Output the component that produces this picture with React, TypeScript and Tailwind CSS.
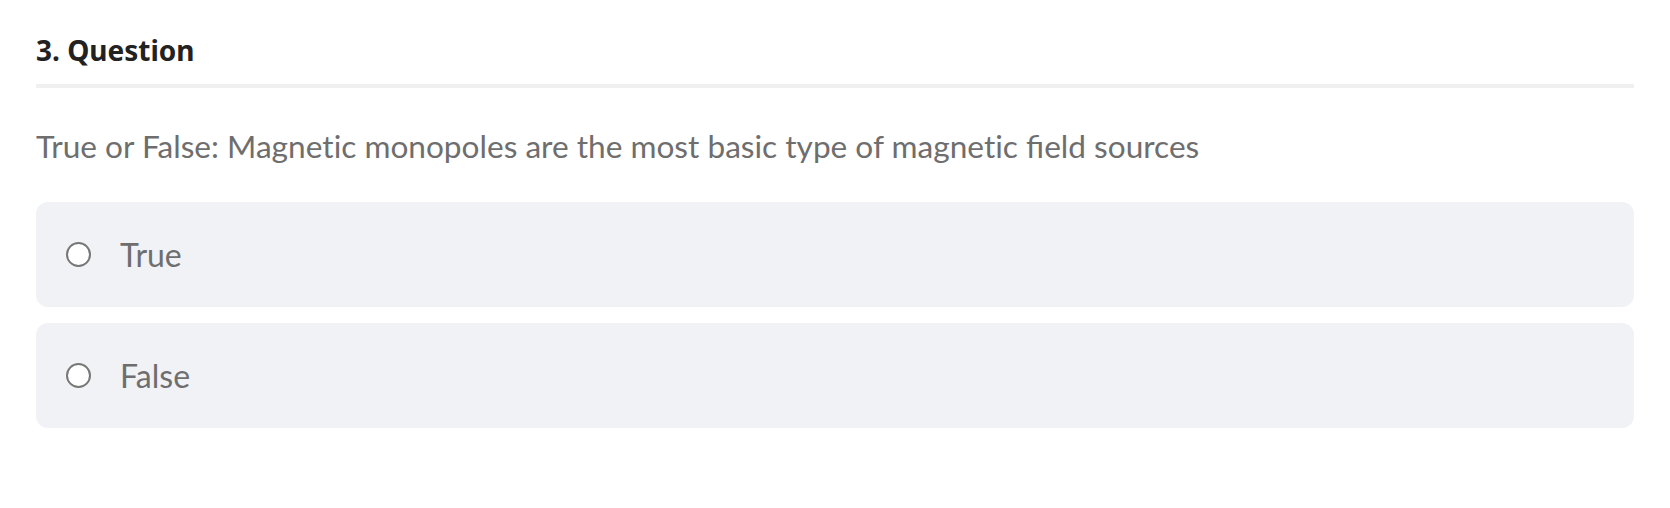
export default function App() {
  const options = ["True", "False"];
  return (
    <div className="min-h-screen bg-white px-[36px] pt-[32px]">
      <h2 className="text-[28px] font-bold leading-[36px] text-[#222222]" style={{ fontFamily: '"Noto Sans", sans-serif' }}>
        3. Question
      </h2>
      <div className="mt-[16px] h-[4px] bg-[#f0f0f0]" />
      <p className="mt-[38px] text-[31.6px] leading-[40px] text-[#6e6e6e]" style={{ fontFamily: "Lato, sans-serif" }}>
        True or False: Magne<span className="[font-variant-ligatures:none]">tic</span> monopoles are the most basic type of
        magne<span className="[font-variant-ligatures:none]">tic</span> field sources
      </p>
      <div className="mt-[36px] flex flex-col gap-[16px]">
        {options.map((o) => (
          <label
            key={o}
            className="flex h-[105px] items-center gap-[29px] rounded-[12px] bg-[#f1f2f6] px-[30px]"
          >
            <span className="h-[25px] w-[25px] rounded-full border-2 border-[#777777] bg-white" />
            <span className="text-[32px] text-[#6e6e6e]" style={{ fontFamily: "Lato, sans-serif" }}>
              {o}
            </span>
          </label>
        ))}
      </div>
    </div>
  );
}
